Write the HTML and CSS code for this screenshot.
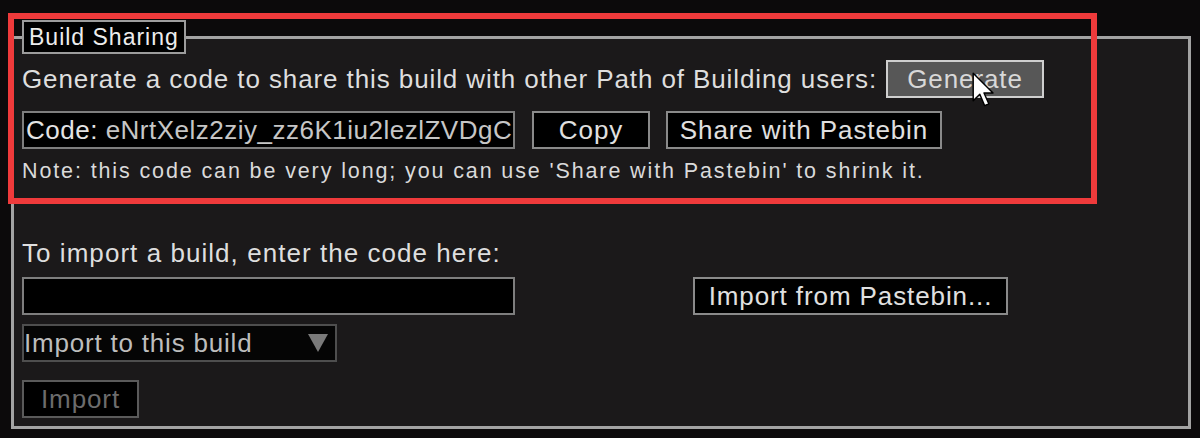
FILE: index.html
```html
<!DOCTYPE html>
<html lang="en">
<head>
<meta charset="utf-8">
<title>Build Sharing</title>
<link rel="stylesheet" href="styles.css">
</head>
<body>
<div class="page">
  <fieldset class="panel">
    <legend class="legend">Build Sharing</legend>
    <div class="row gen-row">
      <span class="label">Generate a code to share this build with other Path of Building users:</span>
      <button class="btn btn-hover gen-btn">Generate</button>
    </div>
    <div class="row code-row">
      <div class="field code-field"><span class="code-key">Code:</span> <span class="code-val">eNrtXelz2ziy_zz6K1iu2lezlZVDgC</span></div>
      <button class="btn copy-btn">Copy</button>
      <button class="btn share-btn">Share with Pastebin</button>
    </div>
    <p class="note">Note: this code can be very long; you can use 'Share with Pastebin' to shrink it.</p>

    <p class="label import-label">To import a build, enter the code here:</p>
    <div class="row import-row">
      <div class="field import-field"></div>
      <button class="btn pastebin-btn">Import from Pastebin...</button>
    </div>
    <div class="dropdown"><span class="dropdown-text">Import to this build</span><span class="caret"></span></div>
    <button class="btn btn-disabled import-btn">Import</button>
  </fieldset>

  <div class="highlight"></div>
  <svg class="cursor" width="24" height="36" viewBox="0 0 20 30">
    <path d="M1 1 L1 24 L6.5 18.5 L10.5 28 L14 26.5 L10 17.5 L17.5 17.5 Z" fill="#ffffff" stroke="#000000" stroke-width="1.2" stroke-linejoin="round"/>
  </svg>
</div>
</body>
</html>
```

FILE: styles.css
```css
* { box-sizing: border-box; }

html, body {
  margin: 0;
  padding: 0;
  background: #0c0a0b;
  width: 1200px;
  height: 438px;
  overflow: hidden;
}

.page {
  position: relative;
  width: 1200px;
  height: 438px;
  padding-top: 20px;
  font-family: "Liberation Sans", Arial, sans-serif;
  color: #e2e2e2;
}

.panel {
  margin: 0 9px 0 11px;
  padding: 6px 8px 8px 8px;
  border: 3px solid #a3a3a3;
  background: #1b191a;
  min-width: 0;
}

.legend {
  padding: 0 5px;
  height: 34px;
  border: 2px solid #9c9c9c;
  background: #000;
  font-size: 23px;
  line-height: 30px;
  letter-spacing: 1px;
  color: #ececec;
}

.row {
  display: flex;
  align-items: center;
}

.label {
  font-size: 26px;
  line-height: 30px;
  letter-spacing: 0.9px;
  color: #dedede;
  margin: 0;
  white-space: nowrap;
}

.btn {
  height: 38px;
  padding: 0;
  border: 2px solid #8a8a8a;
  background: #000;
  color: #e0e0e0;
  font-family: inherit;
  font-size: 26px;
  line-height: 30px;
  letter-spacing: 0.9px;
  text-align: center;
  white-space: nowrap;
}

.btn-hover {
  background: #575757;
  border-color: #cfcfcf;
  color: #d8d8d8;
}

.btn-disabled {
  border-color: #5a5a5a;
  color: #6c6c6c;
}

.gen-row {
  height: 38px;
  gap: 9px;
}

.gen-btn { width: 158px; }

.code-row {
  margin-top: 13px;
  gap: 16px;
}

.field {
  height: 38px;
  border: 2px solid #7e7e7e;
  background: #000;
  font-size: 26px;
  line-height: 34px;
  letter-spacing: 0.5px;
  white-space: nowrap;
  overflow: hidden;
  padding: 0 2px;
}

.code-field { width: 493px; }
.code-key { color: #e4e4e4; }
.code-val { color: #c6c6c6; }

.copy-btn { width: 118px; margin-left: 1px; }
.share-btn { width: 276px; }

.note {
  margin: 10px 0 0 0;
  font-size: 21.5px;
  line-height: 24px;
  letter-spacing: 1.88px;
  color: #dadada;
  white-space: nowrap;
}

.import-label {
  margin-top: 55px;
  letter-spacing: 1.05px;
}

.import-row {
  margin-top: 9px;
  gap: 178px;
}

.import-field { width: 493px; }
.pastebin-btn { width: 315px; }

.dropdown {
  margin-top: 9px;
  width: 315px;
  height: 38px;
  border: 2px solid #4e4e4e;
  background: #050505;
  display: flex;
  align-items: center;
  justify-content: space-between;
  padding: 0 7px 0 0;
}

.dropdown-text {
  font-size: 26px;
  line-height: 30px;
  letter-spacing: 0.8px;
  color: #bdbdbd;
  white-space: nowrap;
}

.caret {
  width: 0;
  height: 0;
  border-left: 10px solid transparent;
  border-right: 10px solid transparent;
  border-top: 18px solid #7a7a7a;
}

.import-btn {
  display: block;
  margin-top: 18px;
  width: 117px;
}

.highlight {
  position: absolute;
  left: 8px;
  top: 13px;
  width: 1089px;
  height: 191px;
  border: 6px solid #ef3a3b;
  pointer-events: none;
}

.cursor {
  position: absolute;
  left: 972px;
  top: 72px;
}
```
